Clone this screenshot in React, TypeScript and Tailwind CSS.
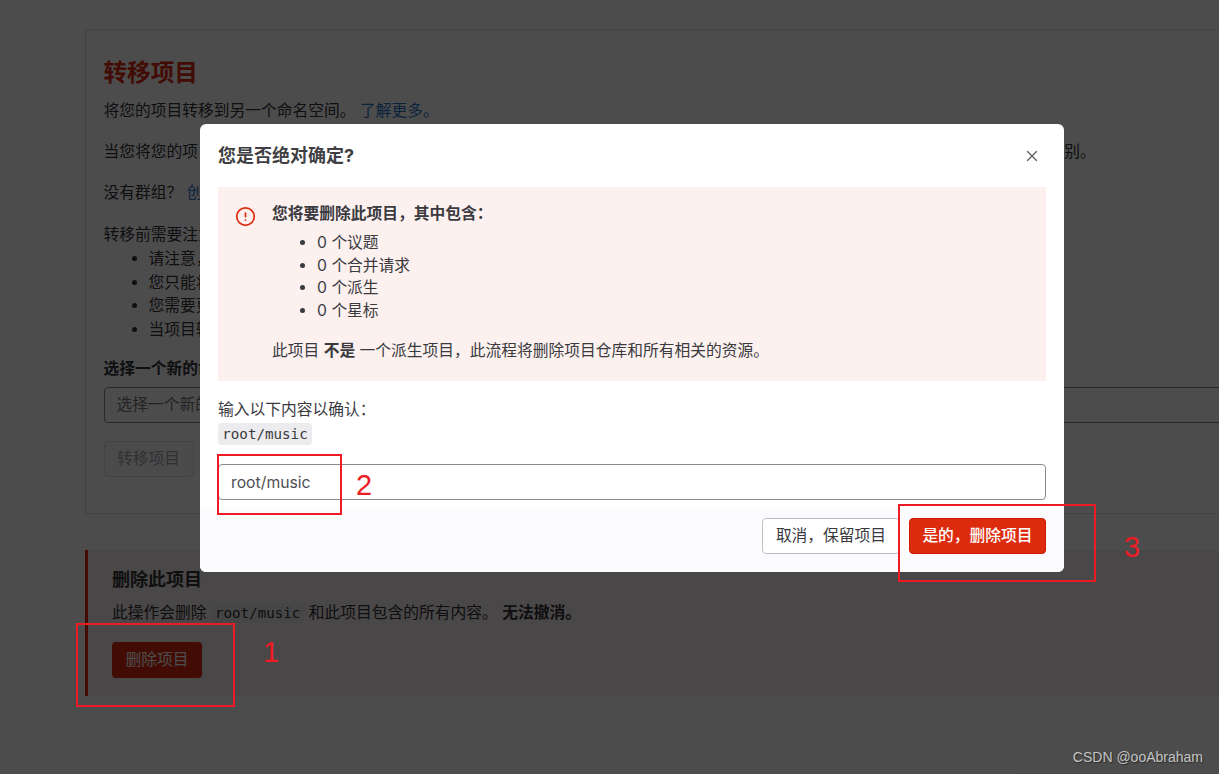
import { CircleAlert, X } from "lucide-react";

const sans = "font-['Inter','Noto_Sans_CJK_SC',sans-serif]";
const mono = "font-['DejaVu_Sans_Mono','Noto_Sans_CJK_SC',monospace]";

const counts = ["个议题", "个合并请求", "个派生", "个星标"];
const notes = [
  "请注意，项目转移后原有的访问地址将会发生变化。",
  "您只能将项目转移到您拥有管理权限的命名空间。",
  "您需要更新本地仓库以指向新的位置。",
  "当项目转移后，可见性级别将跟随目标命名空间。",
];

const TransferSection = () => (
  <section className="border border-[#dcdcde] px-[17.5px] pt-[27px] pb-[36px] w-[1180px] border-r-0 text-[15.75px] leading-[23px]">
    <h2 className="text-[23.6px] leading-[32px] font-bold text-[#dd2b0e]">转移项目</h2>
    <p className="mt-[10px]">
      将您的项目转移到另一个命名空间。 <a className="text-[#1f75cb]">了解更多。</a>
    </p>
    <p className="mt-[18px] whitespace-nowrap">
      当您将您的项目转移到群组时，您可以管理多个项目，查看群组中所有议题和合并请求的统一列表，并为您的团队成员设置不同访问权限级别。
    </p>
    <p className="mt-[18px]">
      没有群组？ <a className="text-[#1f75cb]">创建一个群组</a>
    </p>
    <p className="mt-[19px]">转移前需要注意：</p>
    <ul className="list-disc pl-[45px] mt-px">
      {notes.map((n) => (
        <li key={n} className="leading-[23.7px]">{n}</li>
      ))}
    </ul>
    <p className="mt-[15px] font-bold">选择一个新的命名空间</p>
    <div className="mt-[7px] h-9 rounded border border-[#89888d] flex items-center px-3 text-[#737278]">
      选择一个新的命名空间
    </div>
    <button className="mt-[18px] h-9 w-[90px] rounded border border-[#dcdcde] bg-[#fbfafd] text-[#a4a3a8]">
      转移项目
    </button>
  </section>
);

const DeleteSection = () => (
  <section className="mt-9 border-l-[3px] border-[#dd2b0e] bg-[#f4eded] pl-6 pt-[18px] h-[146px] text-[15.75px]">
    <h3 className="text-lg leading-6 font-bold">删除此项目</h3>
    <p className="mt-[9px] leading-6">
      此操作会删除 <code className={`${mono} text-[14.2px] bg-[#ececef] px-1 py-0.5 rounded`}>root/music</code> 和此项目包含的所有内容。 <strong>无法撤消。</strong>
    </p>
    <button className="mt-[17px] h-9 w-[90px] rounded bg-[#dd2b0e] text-white">删除项目</button>
  </section>
);

const Modal = () => (
  <div className="absolute left-[200px] top-[124px] w-[864px] h-[448px] bg-white rounded-md flex flex-col text-[15.75px] text-[#3a3a3f] overflow-hidden">
    <div className="h-[63px] px-[18px] flex items-center justify-between shrink-0">
      <h4 className="text-lg font-bold text-[#3f3f44]">您是否绝对确定?</h4>
      <X size={18} className="text-[#626168] mr-[5px]" strokeWidth={1.8} />
    </div>
    <div className="mx-[18px] h-[194px] bg-[#fcf1ef] pl-[16.5px] pt-[17px] flex gap-[16.5px] shrink-0">
      <CircleAlert size={21} className="text-[#dd2b0e] mt-[1.5px] shrink-0" strokeWidth={2} />
      <div>
        <p className="font-bold leading-5">您将要删除此项目，其中包含：</p>
        <ul className="list-disc pl-[45px] mt-2">
          {counts.map((c) => (
            <li key={c} className="leading-[22.6px]">0 {c}</li>
          ))}
        </ul>
        <p className="mt-[17px] leading-6">
          此项目 <strong>不是</strong> 一个派生项目，此流程将删除项目仓库和所有相关的资源。
        </p>
      </div>
    </div>
    <div className="px-[18px] pt-[19px] grow">
      <p className="leading-5">输入以下内容以确认：</p>
      <code className={`${mono} block w-[94px] mt-[3px] h-[22px] leading-[22px] bg-[#ececef] text-center rounded text-[14.2px]`}>root/music</code>
      <input
        readOnly
        value="root/music"
        className="block mt-[19px] w-full h-9 px-3 rounded border border-[#89888d] text-[15.75px] text-[#4f4f55] outline-none"
      />
    </div>
    <div className="h-[63px] bg-[#fbfafd] px-[18px] pt-[9px] flex items-start justify-end gap-[9px] shrink-0">
      <button className="h-9 w-[138px] rounded border border-[#bfbfc3] bg-white text-[#3a3a3f]">取消，保留项目</button>
      <button className="h-9 w-[137px] rounded border border-[#c91c00] bg-[#dd2b0e] text-white font-medium">是的，删除项目</button>
    </div>
  </div>
);

const digit = "absolute font-['Liberation_Sans',sans-serif] text-[29px] leading-none text-[#ed1c24]";
const box = "absolute border-2 border-[#ed1c24]";

export default function App() {
  return (
    <div className={`relative h-screen w-full overflow-hidden bg-white text-[#333238] ${sans}`}>
      <main className="pl-[85px] pt-[29px]">
        <TransferSection />
        <DeleteSection />
      </main>
      <div className="absolute inset-0 bg-black/70" />
      <Modal />
      {/* red annotations on top of the screenshot */}
      <div className={`${box} left-[76px] top-[623px] w-[159px] h-[84px]`} />
      <div className={`${digit} left-[263px] top-[638px]`}>1</div>
      <div className={`${box} left-[217px] top-[454px] w-[125px] h-[61px]`} />
      <div className={`${digit} left-[356px] top-[471px]`}>2</div>
      <div className={`${box} left-[898px] top-[504px] w-[198px] h-[78px]`} />
      <div className={`${digit} left-[1124px] top-[533px]`}>3</div>
      <div className="absolute right-4 bottom-[7px] font-['Liberation_Sans',sans-serif] text-sm text-[#c4c4c4] [text-shadow:1px_1px_1px_#2c2c2c]">
        CSDN @ooAbraham
      </div>
    </div>
  );
}
